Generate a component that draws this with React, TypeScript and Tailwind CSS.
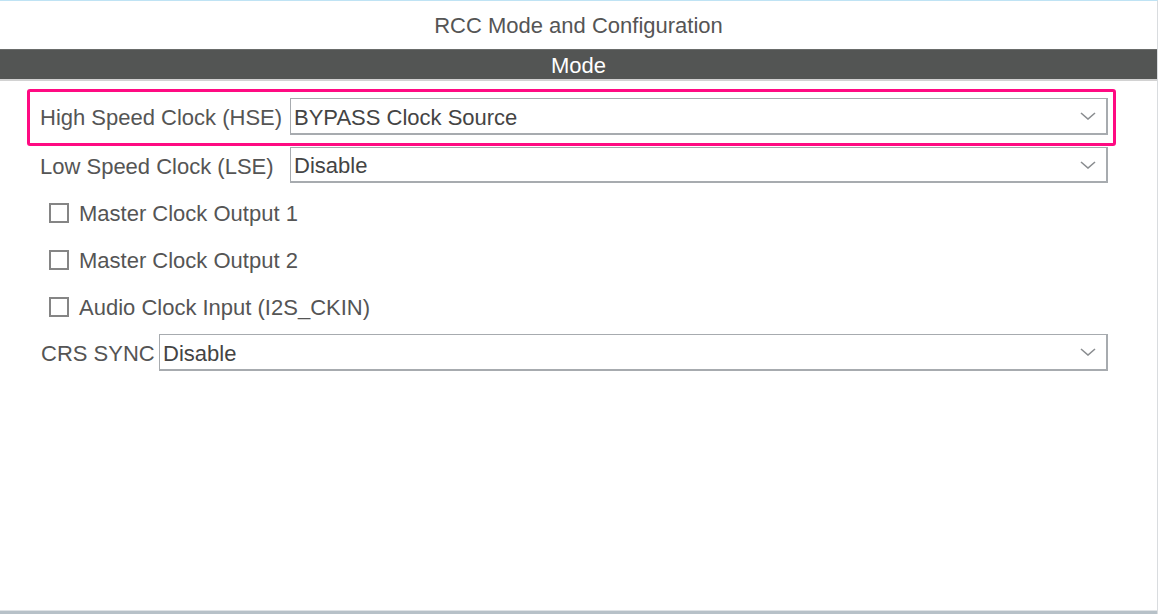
import React from "react";

function Chevron() {
  return (
    <svg width="16" height="8" viewBox="0 0 16 8" className="shrink-0">
      <polyline points="1,1 8,7 15,1" fill="none" stroke="#8a8d90" strokeWidth="1.6" />
    </svg>
  );
}

function Select({ value, className = "" }: { value: string; className?: string }) {
  return (
    <div
      className={`flex flex-1 items-center justify-between border border-r-2 border-b-2 border-[#a7abaf] bg-white pl-[3px] pr-[10px] text-[#444444] ${className}`}
    >
      <span className="pt-[3px] leading-none">{value}</span>
      <Chevron />
    </div>
  );
}

function CheckRow({ label }: { label: string }) {
  return (
    <div className="flex h-[47px] items-center pl-[49px]">
      <span className="h-[20px] w-[20px] shrink-0 border-2 border-[#858585] bg-white" />
      <span className="ml-[10px] pt-[3px] leading-none text-[#555555]">{label}</span>
    </div>
  );
}

export default function App() {
  return (
    <div
      className="flex h-[614px] w-full flex-col border-t border-r border-t-[#bfe3f4] border-r-[#d9dcdf] bg-white text-[22px]"
      style={{ fontFamily: '"Liberation Sans", Arial, sans-serif' }}
    >
      <div className="flex h-[48px] items-center justify-center text-[#555555]">
        RCC Mode and Configuration
      </div>

      <div className="flex h-[32px] items-center justify-center border-t border-b-2 border-t-[#6a6c6b] border-b-[#d2d2d2] bg-[#535554] pt-[3px] leading-none text-white">
        Mode
      </div>

      <div className="flex flex-1 flex-col pr-[49px]">
        <div className="ml-[27px] mr-[-8px] mt-[8px] rounded-[3px] border-[3px] border-[#ff0a82] pt-[6px] pb-[8px] pl-[10px] pr-[5px]">
          <div className="flex h-[37px] items-center">
            <span className="w-[250px] shrink-0 pt-[3px] leading-none text-[#555555]">High Speed Clock (HSE)</span>
            <Select value="BYPASS Clock Source" className="h-[37px]" />
          </div>
        </div>

        <div className="mt-[1px] flex h-[36px] items-center pl-[40px]">
          <span className="w-[250px] shrink-0 pt-[3px] leading-none text-[#555555]">Low Speed Clock (LSE)</span>
          <Select value="Disable" className="h-[36px]" />
        </div>

        <div className="mt-[6px] flex flex-col">
          <CheckRow label="Master Clock Output 1" />
          <CheckRow label="Master Clock Output 2" />
          <CheckRow label="Audio Clock Input (I2S_CKIN)" />
        </div>

        <div className="mt-[4px] flex h-[37px] items-center pl-[41px]">
          <span className="w-[118px] shrink-0 pt-[3px] leading-none text-[#555555]">CRS SYNC</span>
          <Select value="Disable" className="h-[37px]" />
        </div>
      </div>

      <div className="h-[4px] border-t border-t-[#dfe3e6] bg-[#b7c1c8]" />
    </div>
  );
}
